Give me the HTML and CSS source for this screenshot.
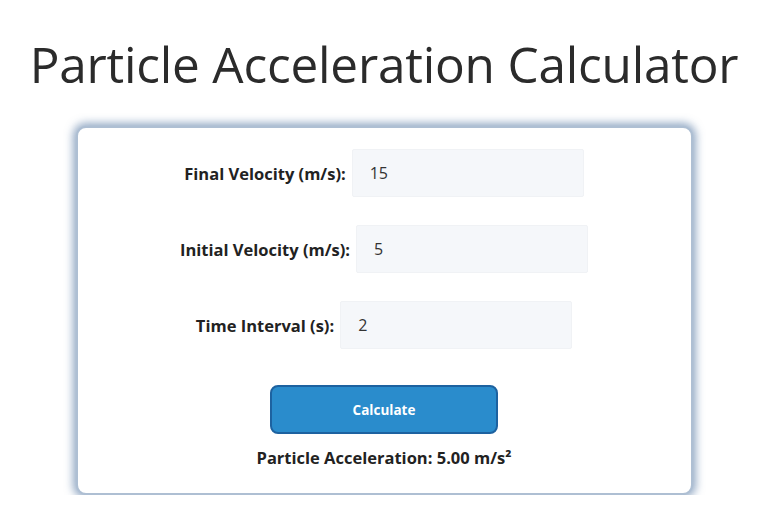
FILE: index.html
```html
<!DOCTYPE html>
<html lang="en">
<head>
    <meta charset="UTF-8">
    <meta name="viewport" content="width=device-width, initial-scale=1.0">
    <title>Particle Acceleration Calculator</title>
    <link rel="stylesheet" href="styles.css">
</head>
<body>
    <h1 class="title">Particle Acceleration Calculator</h1>

    <div class="calculator">
        <div class="form-row">
            <label for="finalVelocity">Final Velocity (m/s):</label>
            <input type="number" id="finalVelocity" value="15">
        </div>
        <div class="form-row">
            <label for="initialVelocity">Initial Velocity (m/s):</label>
            <input type="number" id="initialVelocity" value="5">
        </div>
        <div class="form-row">
            <label for="timeInterval">Time Interval (s):</label>
            <input type="number" id="timeInterval" value="2">
        </div>
        <button class="calc-button" onclick="calculate()">Calculate</button>
        <div class="result" id="result">Particle Acceleration: 5.00 m/s²</div>
    </div>

    <script>
        function calculate() {
            const vf = parseFloat(document.getElementById("finalVelocity").value);
            const vi = parseFloat(document.getElementById("initialVelocity").value);
            const t = parseFloat(document.getElementById("timeInterval").value);
            const result = document.getElementById("result");
            if (isNaN(vf) || isNaN(vi) || isNaN(t) || t === 0) {
                result.textContent = "Please enter valid values.";
                return;
            }
            const a = (vf - vi) / t;
            result.textContent = `Particle Acceleration: ${a.toFixed(2)} m/s²`;
        }
    </script>
</body>
</html>
```

FILE: styles.css
```css
body {
    font-family: "Open Sans", "Noto Sans", Arial, sans-serif;
    background-color: #ffffff;
    color: #222;
    margin: 0;
    padding: 0;
    display: flex;
    flex-direction: column;
    align-items: center;
}
.title {
    font-size: 49.5px;
    font-weight: 400;
    color: #2b2b2b;
    margin: 31px 0 0;
    line-height: 66px;
    letter-spacing: -0.2px;
}
.calculator {
    margin-top: 29px;
    width: 617px;
    box-sizing: border-box;
    background-color: #ffffff;
    border: 2px solid #aebfd3;
    border-radius: 10px;
    box-shadow: 0 0 9px 3px rgba(60, 100, 150, 0.55);
    padding: 21px 20px 24px;
    display: flex;
    flex-direction: column;
    align-items: center;
}
.form-row {
    display: flex;
    align-items: center;
    margin-bottom: 28px;
}
.form-row label {
    font-size: 16.5px;
    font-weight: 700;
    color: #222;
    margin-right: 6px;
}
.form-row input {
    width: 232px;
    height: 48px;
    box-sizing: border-box;
    padding: 0 17px;
    font-family: inherit;
    font-size: 16px;
    color: #333;
    background-color: #f5f7fa;
    border: 1px solid #f0f2f5;
    border-radius: 2px;
    -moz-appearance: textfield;
}
.form-row input::-webkit-outer-spin-button,
.form-row input::-webkit-inner-spin-button {
    -webkit-appearance: none;
    margin: 0;
}
.calc-button {
    margin-top: 8px;
    width: 228px;
    height: 49px;
    font-family: inherit;
    font-size: 13.5px;
    font-weight: 700;
    color: #ffffff;
    background-color: #2a8ccc;
    border: 2px solid #1d62a0;
    border-radius: 8px;
    cursor: pointer;
}
.calc-button:hover {
    background-color: #2379b3;
}
.result {
    margin-top: 12px;
    font-size: 16.5px;
    font-weight: 700;
    color: #222;
}
```
